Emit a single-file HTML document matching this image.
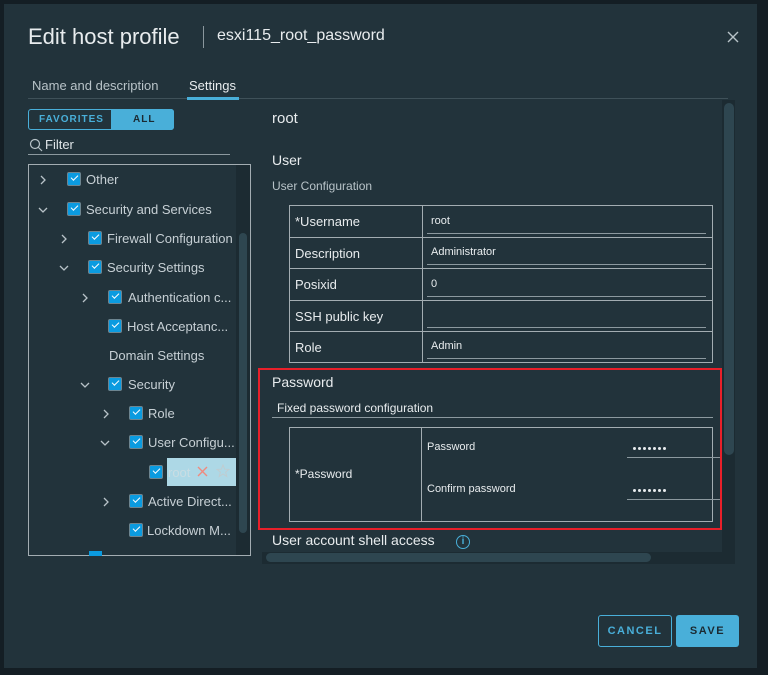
<!DOCTYPE html><html><head><style>
*{box-sizing:border-box;margin:0;padding:0}
body{width:768px;height:675px;background:#141e24;font-family:"Liberation Sans",sans-serif;color:#e8ecee;position:relative;overflow:hidden}
.a{position:absolute}
.dlg{left:4px;top:4px;width:753px;height:664px;background:#22333b}
.cb{position:absolute;width:14px;height:14px;background:#0b9be0;border:1px solid #6d8590;border-radius:2px}
.cb:after{content:"";position:absolute;left:3px;top:2px;width:6px;height:3px;border-left:1.5px solid #fff;border-bottom:1.5px solid #fff;transform:rotate(-45deg)}
.t{position:absolute;font-size:13px;color:#c7d0d5;white-space:nowrap}
.r,.d{position:absolute;width:10px;height:10px}
table{border-collapse:collapse}
td{border:1px solid #a3adb2;font-size:13px;color:#e8ecee}
.in{font-size:11px;border-bottom:1px solid #8c999f;padding:5px 0 6px 4px;margin:0 6px 0 4px}
.dots{position:absolute;display:flex;gap:2px}
.dots i{width:3px;height:3px;background:#e8ecee;border-radius:50%}
</style></head><body>
<svg width="0" height="0" style="position:absolute"><defs>
<symbol id="r" viewBox="0 0 10 10"><path d="M3 1L7 5L3 9" stroke="#b8c3c8" fill="none" stroke-width="1.3"/></symbol>
<symbol id="d" viewBox="0 0 10 10"><path d="M1 3L5 7L9 3" stroke="#b8c3c8" fill="none" stroke-width="1.3"/></symbol>
</defs></svg>
<div class="a dlg"></div>
<div class="a" style="left:28px;top:24px;font-size:22px;color:#e8ecee">Edit host profile</div>
<div class="a" style="left:203px;top:26px;width:1px;height:22px;background:#8a979d"></div>
<div class="a" style="left:217px;top:27px;font-size:16px">esxi115_root_password</div>
<svg class="a" style="left:727px;top:31px" width="12" height="12"><path d="M1 1L11 11M11 1L1 11" stroke="#b8c3c8" stroke-width="1.4"/></svg>
<div class="a" style="left:32px;top:78px;font-size:13px;color:#b8c3c8">Name and description</div>
<div class="a" style="left:189px;top:78px;font-size:13px;color:#e8ecee">Settings</div>
<div class="a" style="left:28px;top:98px;width:700px;height:1px;background:#3f5159"></div>
<div class="a" style="left:187px;top:97px;width:52px;height:3px;background:#49afd9"></div>
<div class="a" style="left:28px;top:109px;width:146px;height:21px;border:1px solid #49afd9;border-radius:3px"></div>
<div class="a" style="left:111px;top:109px;width:63px;height:21px;background:#49afd9;border-radius:0 3px 3px 0"></div>
<div class="a" style="left:39px;top:114px;font-size:10px;letter-spacing:1px;color:#49afd9;font-weight:bold">FAVORITES</div>
<div class="a" style="left:133px;top:114px;font-size:10px;letter-spacing:1px;color:#1b2a32;font-weight:bold">ALL</div>
<svg class="a" style="left:29px;top:138px" width="14" height="14"><circle cx="6" cy="6" r="4.5" stroke="#b8c3c8" fill="none" stroke-width="1.2"/><path d="M9.5 9.5L13 13" stroke="#b8c3c8" stroke-width="1.2"/></svg>
<div class="a" style="left:45px;top:137px;font-size:13px;color:#dfe5e8">Filter</div>
<div class="a" style="left:28px;top:154px;width:202px;height:1px;background:#8c999f"></div>
<div class="a" style="left:28px;top:164px;width:223px;height:392px;border:1px solid #a3adb2;overflow:hidden">
<div class="a" style="right:0;top:0;width:14px;height:392px;background:#1c2b32"></div>
<div class="a" style="right:3px;top:68px;width:8px;height:300px;background:#2e4650;border-radius:4px"></div>
</div>
<svg class="r" style="left:38px;top:175px"><use href="#r"/></svg><div class="cb" style="left:67px;top:172px"></div><div class="t" style="left:86px;top:172px">Other</div>
<svg class="d" style="left:38px;top:205px"><use href="#d"/></svg><div class="cb" style="left:67px;top:202px"></div><div class="t" style="left:86px;top:202px">Security and Services</div>
<svg class="r" style="left:59px;top:234px"><use href="#r"/></svg><div class="cb" style="left:88px;top:231px"></div><div class="t" style="left:107px;top:231px">Firewall Configuration</div>
<svg class="d" style="left:59px;top:263px"><use href="#d"/></svg><div class="cb" style="left:88px;top:260px"></div><div class="t" style="left:107px;top:260px">Security Settings</div>
<svg class="r" style="left:80px;top:293px"><use href="#r"/></svg><div class="cb" style="left:108px;top:290px"></div><div class="t" style="left:128px;top:290px">Authentication c...</div>
<div class="cb" style="left:108px;top:319px"></div><div class="t" style="left:127px;top:319px">Host Acceptanc...</div>
<div class="t" style="left:109px;top:348px">Domain Settings</div>
<svg class="d" style="left:80px;top:380px"><use href="#d"/></svg><div class="cb" style="left:108px;top:377px"></div><div class="t" style="left:128px;top:377px">Security</div>
<svg class="r" style="left:101px;top:409px"><use href="#r"/></svg><div class="cb" style="left:129px;top:406px"></div><div class="t" style="left:148px;top:406px">Role</div>
<svg class="d" style="left:100px;top:438px"><use href="#d"/></svg><div class="cb" style="left:129px;top:435px"></div><div class="t" style="left:148px;top:435px">User Configu...</div>
<div class="cb" style="left:149px;top:465px"></div>
<div class="a" style="left:167px;top:458px;width:69px;height:28px;background:#add8e6"></div>
<div class="t" style="left:168px;top:465px;color:#c9dde3">root</div>
<svg class="a" style="left:197px;top:466px" width="11" height="11"><path d="M1 1L10 10M10 1L1 10" stroke="#f08a7e" stroke-width="1.4"/></svg>
<svg class="a" style="left:216px;top:464px" width="14" height="14" viewBox="0 0 14 14"><path d="M7 1L8.7 5.2L13 5.4L9.6 8.1L10.8 12.5L7 10L3.2 12.5L4.4 8.1L1 5.4L5.3 5.2Z" stroke="#c0ccd0" fill="none" stroke-width="1"/></svg>
<svg class="r" style="left:101px;top:497px"><use href="#r"/></svg><div class="cb" style="left:129px;top:494px"></div><div class="t" style="left:148px;top:494px">Active Direct...</div>
<div class="cb" style="left:129px;top:523px"></div><div class="t" style="left:147px;top:523px">Lockdown M...</div>
<div class="a" style="left:89px;top:551px;width:13px;height:5px;background:#0b9be0"></div>
<div class="a" style="left:262px;top:100px;width:473px;height:464px;background:#1c2b32"></div>
<div class="a" style="left:262px;top:100px;width:460px;height:452px;background:#22333b"></div>
<div class="a" style="left:724px;top:103px;width:10px;height:352px;background:#2e4650;border-radius:5px"></div>
<div class="a" style="left:266px;top:553px;width:385px;height:9px;background:#2e4650;border-radius:5px"></div>
<div class="a" style="left:272px;top:110px;font-size:15px">root</div>
<div class="a" style="left:272px;top:152px;font-size:14px">User</div>
<div class="a" style="left:272px;top:179px;font-size:12px;color:#b8c3c8">User Configuration</div>
<table class="a" style="left:289px;top:205px;width:424px">
<tr style="height:32px"><td style="width:133px;padding-left:5px">*Username</td><td><div class="in">root</div></td></tr>
<tr style="height:31px"><td style="padding-left:5px">Description</td><td><div class="in">Administrator</div></td></tr>
<tr style="height:32px"><td style="padding-left:5px">Posixid</td><td><div class="in">0</div></td></tr>
<tr style="height:31px"><td style="padding-left:5px">SSH public key</td><td><div class="in">&nbsp;</div></td></tr>
<tr style="height:31px"><td style="padding-left:5px">Role</td><td><div class="in">Admin</div></td></tr>
</table>
<div class="a" style="left:258px;top:368px;width:464px;height:162px;border:2px solid #e8202a"></div>
<div class="a" style="left:272px;top:374px;font-size:14px">Password</div>
<div class="a" style="left:277px;top:401px;font-size:12px">Fixed password configuration</div>
<div class="a" style="left:272px;top:417px;width:441px;height:1px;background:#8c999f"></div>
<div class="a" style="left:289px;top:427px;width:424px;height:95px;border:1px solid #a3adb2"></div>
<div class="a" style="left:421px;top:427px;width:1px;height:95px;background:#a3adb2"></div>
<div class="a" style="left:295px;top:467px;font-size:12px">*Password</div>
<div class="a" style="left:427px;top:441px;font-size:11px">Password</div>
<div class="a" style="left:427px;top:483px;font-size:11px">Confirm password</div>
<div class="dots" style="left:633px;top:447px"><i></i><i></i><i></i><i></i><i></i><i></i><i></i></div>
<div class="a" style="left:627px;top:457px;width:93px;height:1px;background:#8c999f"></div>
<div class="dots" style="left:633px;top:489px"><i></i><i></i><i></i><i></i><i></i><i></i><i></i></div>
<div class="a" style="left:627px;top:499px;width:93px;height:1px;background:#8c999f"></div>
<div class="a" style="left:272px;top:532px;font-size:14px">User account shell access</div>
<div class="a" style="left:456px;top:535px;width:14px;height:14px;border:1.3px solid #49afd9;border-radius:50%;color:#49afd9;font-size:10px;text-align:center;line-height:12px;font-weight:bold">i</div>
<div class="a" style="left:598px;top:615px;width:74px;height:32px;border:1px solid #49afd9;border-radius:3px;color:#49afd9;font-size:11px;letter-spacing:1.5px;text-align:center;line-height:30px;font-weight:bold">CANCEL</div>
<div class="a" style="left:676px;top:615px;width:63px;height:32px;background:#49afd9;border-radius:3px;color:#1b2a32;font-size:11px;letter-spacing:1.5px;text-align:center;line-height:32px;font-weight:bold">SAVE</div>
</body></html>
